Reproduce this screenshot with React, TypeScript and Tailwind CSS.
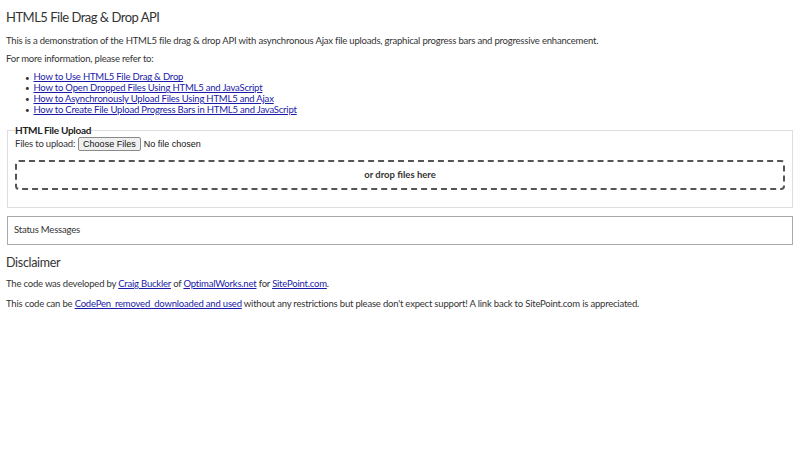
import React from "react";

const link = "text-[#1a1aa8] underline";

export default function App() {
  return (
    <div
      className="w-[800px] h-[450px] bg-white text-[#333] px-[6px] pt-[8px] text-[9.5px] leading-[10.7px] tracking-[-0.2px] overflow-hidden"
      style={{ fontFamily: 'Lato, "Open Sans", sans-serif' }}
    >
      <h1 className="text-[13px] leading-[18px] tracking-[-0.5px] text-[#333] font-normal">HTML5 File Drag &amp; Drop API</h1>
      <p className="mt-[10px]">
        This is a demonstration of the HTML5 file drag &amp; drop API with asynchronous Ajax file uploads, graphical progress bars and progressive enhancement.
      </p>
      <p className="mt-[7px]">For more information, please refer to:</p>
      <ul className="mt-[8px] pl-[19px]">
        <li className="flex items-center gap-[4px]"><span className="text-[8px] leading-[10px]">•</span><a className={link} href="#">How to Use HTML5 File Drag &amp; Drop</a></li>
        <li className="flex items-center gap-[4px]"><span className="text-[8px] leading-[10px]">•</span><a className={link} href="#">How to Open Dropped Files Using HTML5 and JavaScript</a></li>
        <li className="flex items-center gap-[4px]"><span className="text-[8px] leading-[10px]">•</span><a className={link} href="#">How to Asynchronously Upload Files Using HTML5 and Ajax</a></li>
        <li className="flex items-center gap-[4px]"><span className="text-[8px] leading-[10px]">•</span><a className={link} href="#">How to Create File Upload Progress Bars in HTML5 and JavaScript</a></li>
      </ul>

      <fieldset className="mt-[10px] mx-[1px] border border-[#ddd] px-[7px] pb-[17px]">
        <legend className="font-bold text-[10px] tracking-[-0.3px] text-[#222] px-0">HTML File Upload</legend>
        <div className="flex items-center gap-[3px] mt-[1px]">
          <span>Files to upload:</span>
          <button
            className="h-[14px] px-[4px] border border-[#8a8a8a] rounded-[2px] bg-[#efefef] text-[#111] text-[9px] leading-[12px] tracking-normal"
            style={{ fontFamily: '"Liberation Sans", Arial, sans-serif' }}
          >
            Choose Files
          </button>
          <span className="text-[#111] text-[9px] tracking-normal" style={{ fontFamily: '"Liberation Sans", Arial, sans-serif' }}>No file chosen</span>
        </div>
        <div className="mt-[9px] h-[30px] border-2 border-dashed border-[#555] rounded-[4px] flex items-center justify-center font-bold text-[#333] tracking-normal">
          or drop files here
        </div>
      </fieldset>

      <div className="mt-[8px] mx-[1px] h-[29px] border border-[#aaa] flex items-center px-[6px]">Status Messages</div>

      <h2 className="mt-[10px] text-[12.5px] leading-[16px] tracking-[-0.3px] font-normal">Disclaimer</h2>
      <p className="mt-[8px]">
        The code was developed by <a className={link} href="#">Craig Buckler</a> of <a className={link} href="#">OptimalWorks.net</a> for <a className={link} href="#">SitePoint.com</a>.
      </p>
      <p className="mt-[9px]">
        This code can be <a className={link} href="#">CodePen_removed_downloaded and used</a> without any restrictions but please don't expect support! A link back to SitePoint.com is appreciated.
      </p>
    </div>
  );
}
